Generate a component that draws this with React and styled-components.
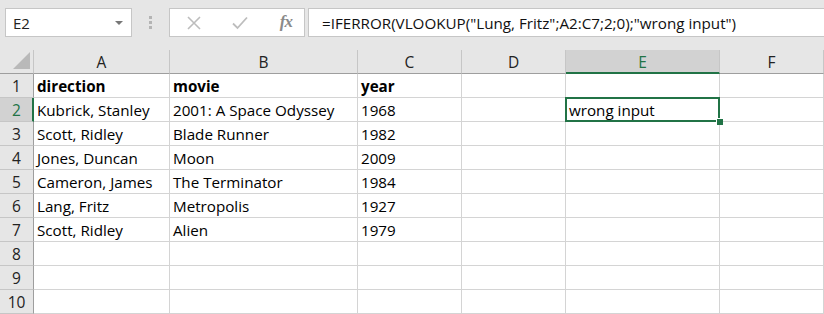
import styled, { createGlobalStyle } from "styled-components";

const GlobalStyle = createGlobalStyle`
  html, body {
    margin: 0;
    padding: 0;
    background: #ffffff;
  }
  body {
    font-family: "Open Sans", "Liberation Sans", Arial, sans-serif;
    overflow: hidden;
  }
`;

const columns = [
  { key: "A", width: 136 },
  { key: "B", width: 188 },
  { key: "C", width: 104 },
  { key: "D", width: 104 },
  { key: "E", width: 154 },
  { key: "F", width: 104 },
];

const rows = [
  { A: "direction", B: "movie", C: "year", bold: true },
  { A: "Kubrick, Stanley", B: "2001: A Space Odyssey", C: "1968", E: "wrong input" },
  { A: "Scott, Ridley", B: "Blade Runner", C: "1982" },
  { A: "Jones, Duncan", B: "Moon", C: "2009" },
  { A: "Cameron, James", B: "The Terminator", C: "1984" },
  { A: "Lang, Fritz", B: "Metropolis", C: "1927" },
  { A: "Scott, Ridley", B: "Alien", C: "1979" },
  {},
  {},
  {},
];

const activeCol = "E";
const activeRow = 2;

const App = () => {
  return (
    <Window>
      <GlobalStyle />
      <FormulaBar>
        <NameBox>
          <span>E2</span>
          <DropArrow />
        </NameBox>
        <Grip>
          <i />
          <i />
          <i />
        </Grip>
        <ActionBox>
          <svg width="14" height="14" viewBox="0 0 14 14">
            <path d="M1 1L13 13M13 1L1 13" stroke="#bdbdbd" strokeWidth="1.6" fill="none" />
          </svg>
          <svg width="16" height="14" viewBox="0 0 16 14">
            <path d="M1 7.5L5.5 12L15 1.5" stroke="#bdbdbd" strokeWidth="1.8" fill="none" />
          </svg>
          <Fx>fx</Fx>
        </ActionBox>
        <FormulaInput>=IFERROR(VLOOKUP("Lung, Fritz";A2:C7;2;0);"wrong input")</FormulaInput>
      </FormulaBar>

      <Sheet>
        <Corner>
          <svg width="18" height="17" viewBox="0 0 18 17">
            <polygon points="17,0 17,17 0,17" fill="#b9b9b9" />
          </svg>
        </Corner>
        {columns.map((col) => (
          <ColHeader key={col.key} $active={col.key === activeCol}>
            {col.key}
          </ColHeader>
        ))}

        {rows.map((row, i) => {
          const rowNum = i + 1;
          return [
            <RowHeader key={`h${rowNum}`} $active={rowNum === activeRow}>
              {rowNum}
            </RowHeader>,
            ...columns.map((col) => {
              const selected = rowNum === activeRow && col.key === activeCol;
              return (
                <Cell key={`${col.key}${rowNum}`} $bold={row.bold} $selected={selected}>
                  {row[col.key]}
                  {selected && (
                    <Selection>
                      <FillHandle />
                    </Selection>
                  )}
                </Cell>
              );
            }),
          ];
        })}
      </Sheet>
    </Window>
  );
};

export default App;

const Window = styled.div`
  width: 824px;
  height: 314px;
  overflow: hidden;
  background: #e6e6e6;
`;

const FormulaBar = styled.div`
  height: 50px;
  box-sizing: border-box;
  padding: 8px 0 0 5px;
  display: flex;
  align-items: flex-start;
  background: #e6e6e6;
`;

const BoxBase = styled.div`
  height: 29px;
  box-sizing: border-box;
  background: #ffffff;
  border: 1px solid #c6c6c6;
  display: flex;
  align-items: center;
`;

const NameBox = styled(BoxBase)`
  width: 127px;
  padding: 0 8px 0 7px;
  justify-content: space-between;
  font-size: 15px;
  color: #222222;
`;

const DropArrow = styled.span`
  width: 0;
  height: 0;
  border-left: 4px solid transparent;
  border-right: 4px solid transparent;
  border-top: 4px solid #777777;
  margin-top: 1px;
`;

const Grip = styled.div`
  width: 37px;
  height: 29px;
  display: flex;
  flex-direction: column;
  align-items: center;
  justify-content: center;
  gap: 2px;

  i {
    width: 3px;
    height: 3px;
    background: #b4b4b4;
  }
`;

const ActionBox = styled(BoxBase)`
  width: 136px;
  padding: 0 12px 0 17px;
  justify-content: space-between;
`;

const Fx = styled.span`
  font-family: "Liberation Serif", "Times New Roman", serif;
  font-style: italic;
  font-weight: bold;
  font-size: 17px;
  color: #8a8a8a;
  letter-spacing: -1px;
  margin-top: -2px;
`;

const FormulaInput = styled(BoxBase)`
  flex: 1;
  margin-left: 3px;
  border-right: none;
  padding-left: 13px;
  font-size: 15.2px;
  color: #111111;
  white-space: nowrap;
`;

const Sheet = styled.div`
  display: grid;
  grid-template-columns: 34px ${columns.map((c) => `${c.width}px`).join(" ")};
  grid-auto-rows: 24px;
  background: #ffffff;
`;

const HeaderBase = styled.div`
  box-sizing: border-box;
  background: #e6e6e6;
  display: flex;
  align-items: center;
  justify-content: center;
  font-size: 15.5px;
  color: #222222;
`;

const Corner = styled(HeaderBase)`
  border-right: 1px solid #c6c6c6;
  border-bottom: 1px solid #9e9e9e;
  align-items: flex-end;
  justify-content: flex-end;
  padding: 0 2px 4px 0;
`;

const ColHeader = styled(HeaderBase)`
  border-right: 1px solid #c6c6c6;
  border-bottom: ${(p) => (p.$active ? "2px solid #217346" : "1px solid #9e9e9e")};
  background: ${(p) => (p.$active ? "#d2d2d2" : "#e6e6e6")};
  color: ${(p) => (p.$active ? "#217346" : "#222222")};
  padding-top: ${(p) => (p.$active ? "1px" : "0")};
`;

const RowHeader = styled(HeaderBase)`
  border-right: ${(p) => (p.$active ? "2px solid #217346" : "1px solid #9e9e9e")};
  border-bottom: 1px solid #c6c6c6;
  background: ${(p) => (p.$active ? "#d2d2d2" : "#e6e6e6")};
  color: ${(p) => (p.$active ? "#217346" : "#222222")};
  padding-left: ${(p) => (p.$active ? "1px" : "0")};
`;

const Cell = styled.div`
  position: relative;
  z-index: ${(p) => (p.$selected ? 2 : "auto")};
  box-sizing: border-box;
  border-right: 1px solid #d4d4d4;
  border-bottom: 1px solid #d4d4d4;
  padding: 1px 0 0 3px;
  display: flex;
  align-items: center;
  font-size: 15.2px;
  font-weight: ${(p) => (p.$bold ? 700 : 400)};
  color: #000000;
  white-space: nowrap;
`;

const Selection = styled.div`
  position: absolute;
  left: -1px;
  top: -1px;
  right: -1px;
  bottom: -1px;
  border: 2px solid #217346;
  pointer-events: none;
`;

const FillHandle = styled.div`
  position: absolute;
  right: -5px;
  bottom: -5px;
  width: 7px;
  height: 7px;
  box-sizing: border-box;
  background: #217346;
  border-top: 1px solid #ffffff;
  border-left: 1px solid #ffffff;
`;
